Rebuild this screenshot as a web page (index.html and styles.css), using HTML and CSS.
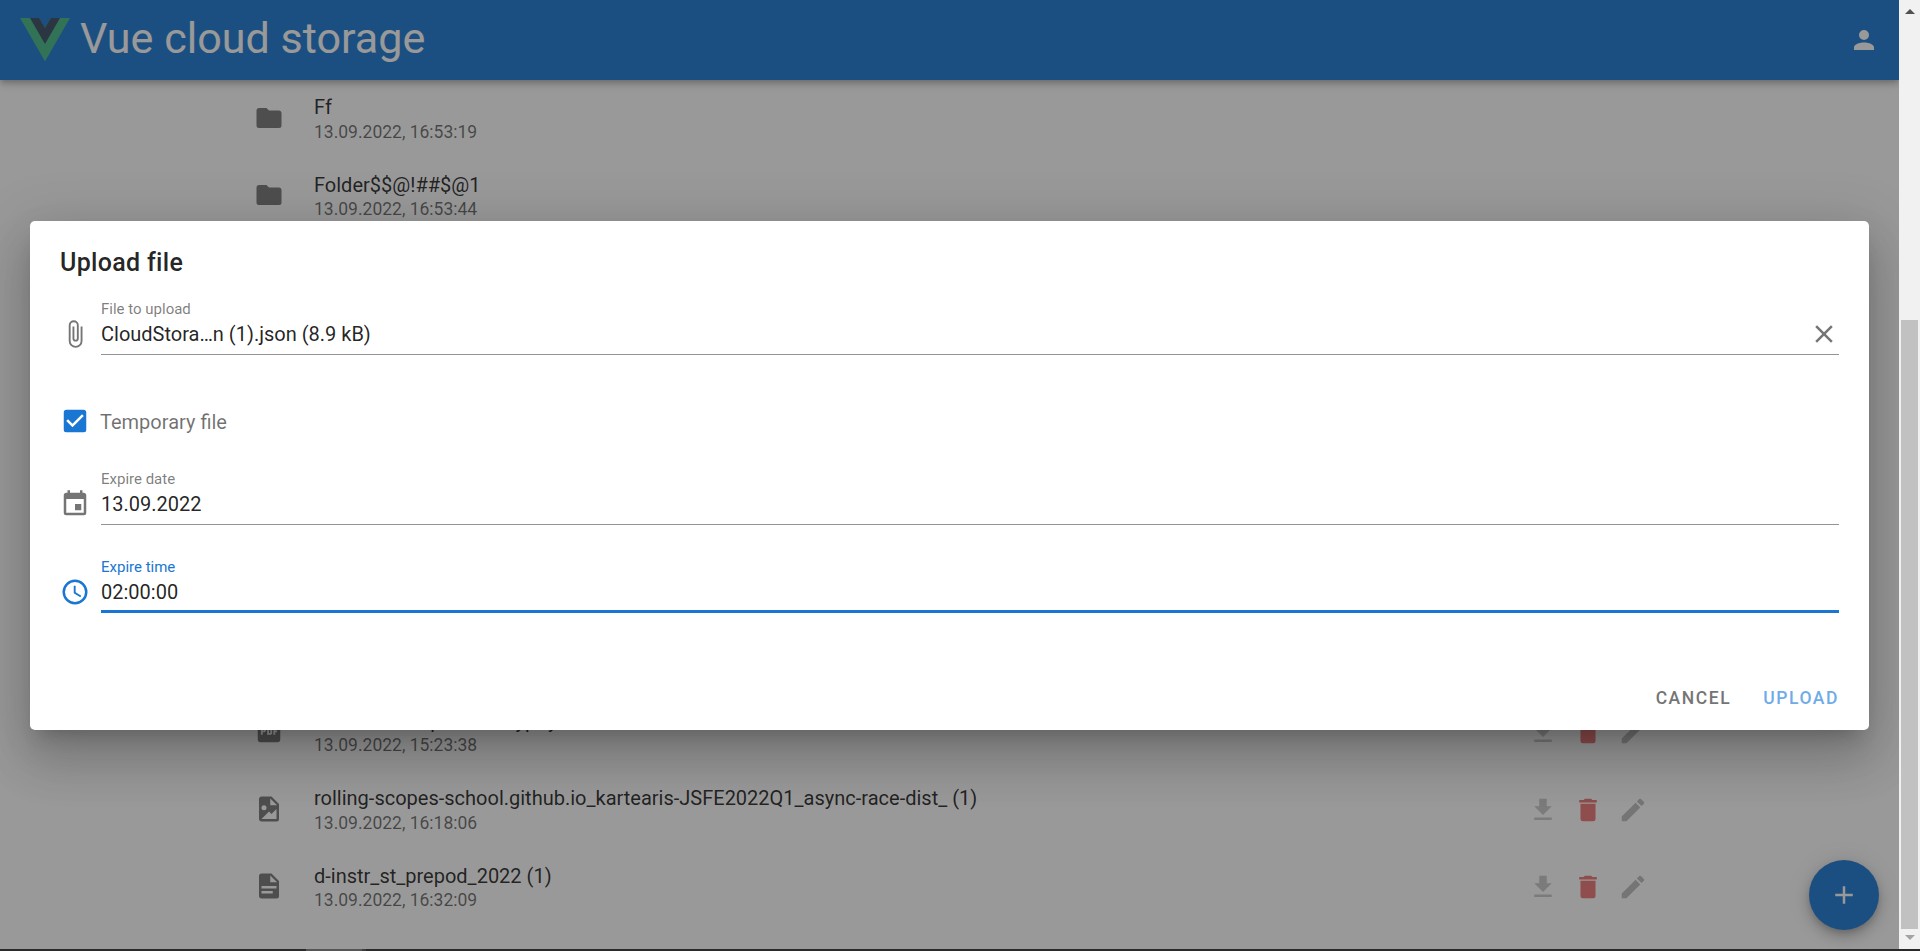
FILE: index.html
```html
<!DOCTYPE html>
<html lang="en">
<head>
<meta charset="utf-8">
<title>Vue cloud storage</title>
<link rel="stylesheet" href="styles.css">
</head>
<body>
<div class="window">
  <div class="viewport">
    <div class="page">
      <header class="appbar">
        <svg class="logo" viewBox="0 0 261.76 226.69"><path class="logo-outer" d="M161.096.001l-30.225 52.351L100.647.001H-.005l130.877 226.688L261.749.001z"/><path class="logo-inner" d="M161.096.001l-30.225 52.351L100.647.001H52.346l78.526 136.01L209.398.001z"/></svg>
        <div class="app-title">Vue cloud storage</div>
        <svg class="icon icon-white user" viewBox="0 0 24 24"><path d="M12,4A4,4 0 0,1 16,8A4,4 0 0,1 12,12A4,4 0 0,1 8,8A4,4 0 0,1 12,4M12,14C16.42,14 20,15.79 20,18V20H4V18C4,15.79 7.58,14 12,14Z"/></svg>
      </header>
      <main class="list">
        <div class="row">
          <svg class="icon icon-file" viewBox="0 0 24 24"><path d="M10,4H4C2.89,4 2,4.89 2,6V18A2,2 0 0,0 4,20H20A2,2 0 0,0 22,18V8C22,6.89 21.1,6 20,6H12L10,4Z"/></svg>
          <div class="row-text"><div class="row-title">Ff</div><div class="row-date">13.09.2022, 16:53:19</div></div>
        </div>
        <div class="row">
          <svg class="icon icon-file" viewBox="0 0 24 24"><path d="M10,4H4C2.89,4 2,4.89 2,6V18A2,2 0 0,0 4,20H20A2,2 0 0,0 22,18V8C22,6.89 21.1,6 20,6H12L10,4Z"/></svg>
          <div class="row-text"><div class="row-title">Folder$$@!##$@1</div><div class="row-date">13.09.2022, 16:53:44</div></div>
        </div>
        <div class="rows-behind-dialog"></div>
        <div class="row">
          <svg class="icon icon-file" viewBox="0 0 24 24"><path d="M19 3H5C3.9 3 3 3.9 3 5V19C3 20.1 3.9 21 5 21H19C20.1 21 21 20.1 21 19V5C21 3.9 20.1 3 19 3M9.5 11.5C9.5 12.3 8.8 13 8 13H7V15H5.5V9H8C8.8 9 9.5 9.7 9.5 10.5V11.5M14.5 13.5C14.5 14.3 13.8 15 13 15H10.5V9H13C13.8 9 14.5 9.7 14.5 10.5V13.5M18.5 10.5H17V11.5H18.5V13H17V15H15.5V9H18.5V10.5M12 10.5H13V13.5H12V10.5M7 10.5H8V11.5H7V10.5Z"/></svg>
          <div class="row-text"><div class="row-title">Lecture note patterns typify</div><div class="row-date">13.09.2022, 15:23:38</div></div>
          <div class="row-actions">
            <svg class="icon icon-action" viewBox="0 0 24 24"><path d="M5,20H19V18H5M19,9H15V3H9V9H5L12,16L19,9Z"/></svg>
            <svg class="icon icon-delete" viewBox="0 0 24 24"><path d="M19,4H15.5L14.5,3H9.5L8.5,4H5V6H19M6,19A2,2 0 0,0 8,21H16A2,2 0 0,0 18,19V7H6V19Z"/></svg>
            <svg class="icon icon-edit" viewBox="0 0 24 24"><path d="M20.71,7.04C21.1,6.65 21.1,6 20.71,5.63L18.37,3.29C18,2.9 17.35,2.9 16.96,3.29L15.12,5.12L18.87,8.87M3,17.25V21H6.75L17.81,9.93L14.06,6.18L3,17.25Z"/></svg>
          </div>
        </div>
        <div class="row">
          <svg class="icon icon-file" viewBox="0 0 24 24"><path d="M13,9H18.5L13,3.5V9M6,2H14L20,8V20A2,2 0 0,1 18,22H6C4.89,22 4,21.1 4,20V4C4,2.89 4.89,2 6,2M6,20H15L18,20V12L14,16L12,14L6,20M8,9A2,2 0 0,0 6,11A2,2 0 0,0 8,13A2,2 0 0,0 10,11A2,2 0 0,0 8,9Z"/></svg>
          <div class="row-text"><div class="row-title">rolling-scopes-school.github.io_kartearis-JSFE2022Q1_async-race-dist_ (1)</div><div class="row-date">13.09.2022, 16:18:06</div></div>
          <div class="row-actions">
            <svg class="icon icon-action" viewBox="0 0 24 24"><path d="M5,20H19V18H5M19,9H15V3H9V9H5L12,16L19,9Z"/></svg>
            <svg class="icon icon-delete" viewBox="0 0 24 24"><path d="M19,4H15.5L14.5,3H9.5L8.5,4H5V6H19M6,19A2,2 0 0,0 8,21H16A2,2 0 0,0 18,19V7H6V19Z"/></svg>
            <svg class="icon icon-edit" viewBox="0 0 24 24"><path d="M20.71,7.04C21.1,6.65 21.1,6 20.71,5.63L18.37,3.29C18,2.9 17.35,2.9 16.96,3.29L15.12,5.12L18.87,8.87M3,17.25V21H6.75L17.81,9.93L14.06,6.18L3,17.25Z"/></svg>
          </div>
        </div>
        <div class="row">
          <svg class="icon icon-file" viewBox="0 0 24 24"><path d="M13,9H18.5L13,3.5V9M6,2H14L20,8V20A2,2 0 0,1 18,22H6C4.89,22 4,21.1 4,20V4C4,2.89 4.89,2 6,2M15,18V16H6V18H15M18,14V12H6V14H18Z"/></svg>
          <div class="row-text"><div class="row-title">d-instr_st_prepod_2022 (1)</div><div class="row-date">13.09.2022, 16:32:09</div></div>
          <div class="row-actions">
            <svg class="icon icon-action" viewBox="0 0 24 24"><path d="M5,20H19V18H5M19,9H15V3H9V9H5L12,16L19,9Z"/></svg>
            <svg class="icon icon-delete" viewBox="0 0 24 24"><path d="M19,4H15.5L14.5,3H9.5L8.5,4H5V6H19M6,19A2,2 0 0,0 8,21H16A2,2 0 0,0 18,19V7H6V19Z"/></svg>
            <svg class="icon icon-edit" viewBox="0 0 24 24"><path d="M20.71,7.04C21.1,6.65 21.1,6 20.71,5.63L18.37,3.29C18,2.9 17.35,2.9 16.96,3.29L15.12,5.12L18.87,8.87M3,17.25V21H6.75L17.81,9.93L14.06,6.18L3,17.25Z"/></svg>
          </div>
        </div>
      </main>
      <div class="fab">
        <svg class="icon icon-white" viewBox="0 0 24 24"><path d="M19,13H13V19H11V13H5V11H11V5H13V11H19V13Z"/></svg>
      </div>
      <div class="overlay">
        <section class="dialog">
          <h2 class="dialog-title">Upload file</h2>
          <div class="dialog-body">
            <div class="field-row">
              <svg class="icon icon-muted" viewBox="0 0 24 24"><path d="M16.5,6V17.5A4,4 0 0,1 12.5,21.5A4,4 0 0,1 8.5,17.5V5A2.5,2.5 0 0,1 11,2.5A2.5,2.5 0 0,1 13.5,5V15.5A1,1 0 0,1 12.5,16.5A1,1 0 0,1 11.5,15.5V6H10V15.5A2.5,2.5 0 0,0 12.5,18A2.5,2.5 0 0,0 15,15.5V5A4,4 0 0,0 11,1A4,4 0 0,0 7,5V17.5A5.5,5.5 0 0,0 12.5,23A5.5,5.5 0 0,0 18,17.5V6H16.5Z"/></svg>
              <div class="field">
                <div class="field-label">File to upload</div>
                <div class="field-value"><span>CloudStora…n (1).json (8.9 kB)</span>
                  <svg class="icon icon-muted" viewBox="0 0 24 24"><path d="M19,6.41L17.59,5L12,10.59L6.41,5L5,6.41L10.59,12L5,17.59L6.41,19L12,13.41L17.59,19L19,17.59L13.41,12L19,6.41Z"/></svg>
                </div>
              </div>
            </div>
            <div class="check-row">
              <svg class="icon icon-primary" viewBox="0 0 24 24"><path d="M10,17L5,12L6.41,10.58L10,14.17L17.59,6.58L19,8M19,3H5C3.89,3 3,3.89 3,5V19A2,2 0 0,0 5,21H19A2,2 0 0,0 21,19V5C21,3.9 20.1,3 19,3Z"/></svg>
              <span class="check-label">Temporary file</span>
            </div>
            <div class="field-row date-row">
              <svg class="icon icon-muted" viewBox="0 0 24 24"><path d="M19,19H5V8H19M16,1V3H8V1H6V3H5C3.89,3 3,3.89 3,5V19A2,2 0 0,0 5,21H19A2,2 0 0,0 21,19V5C21,3.89 20.1,3 19,3H18V1M17,12H12V17H17V12Z"/></svg>
              <div class="field">
                <div class="field-label">Expire date</div>
                <div class="field-value"><span>13.09.2022</span></div>
              </div>
            </div>
            <div class="field-row time-row">
              <svg class="icon icon-primary" viewBox="0 0 24 24"><path d="M12,20A8,8 0 0,0 20,12A8,8 0 0,0 12,4A8,8 0 0,0 4,12A8,8 0 0,0 12,20M12,2A10,10 0 0,1 22,12A10,10 0 0,1 12,22C6.47,22 2,17.5 2,12A10,10 0 0,1 12,2M12.5,7V12.25L17,14.92L16.25,16.15L11,13V7H12.5Z"/></svg>
              <div class="field field-focused">
                <div class="field-label">Expire time</div>
                <div class="field-value"><span>02:00:00</span></div>
              </div>
            </div>
          </div>
          <div class="dialog-actions">
            <button class="btn btn-cancel">Cancel</button>
            <button class="btn btn-upload">Upload</button>
          </div>
        </section>
      </div>
    </div>
    <div class="scrollbar">
      <div class="arrow-box"><span class="arrow-up"></span></div>
      <div class="thumb"></div>
      <div class="arrow-box arrow-box-down"><span class="arrow-down"></span></div>
    </div>
  </div>
  <div class="stripe"><div class="stripe-gap"></div><div class="stripe-tab"></div><div class="stripe-tick"></div></div>
</div>
</body>
</html>
```
FILE: styles.css
```css
* { box-sizing: border-box; }
html, body { margin: 0; height: 951px; overflow: hidden; }
body { font-family: Roboto, "Liberation Sans", sans-serif; background: #fff; color: rgba(0, 0, 0, .87); }
.window { display: flex; flex-direction: column; height: 951px; }
.viewport { display: flex; height: 949px; }
.page { position: relative; flex: 1; min-width: 0; overflow: hidden; background: #fff; }

.appbar { position: relative; z-index: 2; display: flex; align-items: center; height: 80px; padding: 0 20px; background: #1976d2; color: #fff;
  box-shadow: 0 2.5px 5px -1.25px rgba(0,0,0,.2), 0 5px 6px 0 rgba(0,0,0,.14), 0 1.25px 12.5px 0 rgba(0,0,0,.12); }
.logo { width: 50px; height: 43.3px; flex: none; margin-top: -1px; }
.logo-outer { fill: #41b883; }
.logo-inner { fill: #34495e; }
.app-title { margin-left: 10px; font-size: 43.1px; line-height: 50px; margin-top: -2px; flex: 1; }

.icon { display: block; width: 30px; height: 30px; flex: none; }
.icon-white { fill: #fff; }
.icon-file { fill: rgba(0, 0, 0, .54); margin-top: -2px; }
.icon-action { fill: #c8c8c8; }
.icon-delete { fill: #ed7373; }
.icon-edit { fill: #bcbcbc; }
.icon-muted { fill: rgba(0, 0, 0, .54); }
.icon-primary { fill: #1976d2; }

.list { width: 1431px; margin: 0 auto; }
.row { display: flex; align-items: center; height: 77.5px; padding: 0 17px 0 20px; }
.rows-behind-dialog { height: 458.5px; }
.row-text { flex: 1; min-width: 0; margin-left: 30px; }
.row-title { font-size: 20px; line-height: 24px; margin-bottom: 2.5px; white-space: nowrap; }
.row-date { font-size: 17.5px; line-height: 21px; color: rgba(0, 0, 0, .6); }
.row-actions { display: flex; gap: 15px; }

.fab { position: absolute; right: 20px; bottom: 19px; display: flex; align-items: center; justify-content: center; width: 70px; height: 70px; border-radius: 50%; background: #1976d2;
  box-shadow: 0 3.75px 6.25px -1.25px rgba(0,0,0,.2), 0 7.5px 12.5px 1.25px rgba(0,0,0,.14), 0 1.25px 22.5px 1.25px rgba(0,0,0,.12); }

.overlay { position: absolute; inset: 0; z-index: 5; display: flex; align-items: center; padding: 1.5px 30px 0; background: rgba(33, 33, 33, .46); }
.dialog { width: 100%; background: #fff; border-radius: 5px;
  box-shadow: 0 13.75px 18.75px -8.75px rgba(0,0,0,.2), 0 30px 47.5px 3.75px rgba(0,0,0,.14), 0 11.25px 57.5px 10px rgba(0,0,0,.12); }
.dialog-title { margin: 0; padding: 22px 30px 16px; font-size: 25px; font-weight: 500; line-height: 40px; letter-spacing: .3125px; }
.dialog-body { padding: 0 30px; }
.field-row { display: flex; align-items: center; }
.field-row > .icon { margin-top: 13px; margin-right: 11px; }
.field { flex: 1; min-width: 0; height: 56px; padding-top: 1px; border-bottom: 1px solid rgba(0, 0, 0, .42); }
.date-row { margin-top: 33px; }
.time-row { margin-top: 32px; }
.field-label { font-size: 15px; line-height: 18px; color: rgba(0, 0, 0, .52); }
.field-value { display: flex; align-items: center; justify-content: space-between; height: 24px; margin-top: 4px; font-size: 20px; line-height: 24px; }
.field-value .icon { margin-right: 0; }
.field-focused { border-bottom: 3px solid #1976d2; }
.field-focused .field-label { color: #1976d2; }
.check-row { display: flex; align-items: center; gap: 10px; margin-top: 51px; height: 30px; }
.check-label { padding-top: 1px; font-size: 20px; color: rgba(0, 0, 0, .56); }
.dialog-actions { display: flex; justify-content: flex-end; gap: 12px; margin-top: 61.5px; padding: 0 20px 10px; }
.btn { height: 45px; padding: 2px 10px 0; border: 0; background: none; font: 500 17.5px Roboto, sans-serif; letter-spacing: 1.56px; text-transform: uppercase; }
.btn-cancel { color: #757575; }
.btn-upload { color: #70abe9; }

.scrollbar { display: flex; flex-direction: column; width: 21px; padding: 0 2px; background: #f1f1f1; }
.arrow-box { display: flex; justify-content: center; height: 320px; padding-top: 9px; }
.arrow-box-down { height: 20px; padding-top: 6px; }
.thumb { height: 609px; background: #c1c1c1; }
.arrow-up { width: 0; height: 0; border: 5px solid transparent; border-top: 0; border-bottom: 5px solid #505050; }
.arrow-down { width: 0; height: 0; border: 5px solid transparent; border-bottom: 0; border-top: 5px solid #a3a3a3; }

.stripe { display: flex; height: 2px; background: #2a2a2a; }
.stripe-gap { width: 306px; }
.stripe-tab { width: 56px; background: #555; }
.stripe-tick { width: 4px; background: #3c3c3c; }
```
